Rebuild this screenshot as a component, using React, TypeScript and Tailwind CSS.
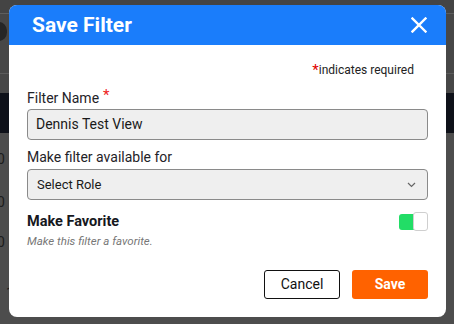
import React from "react";

export default function App() {
  return (
    <div
      className="relative w-[454px] h-[324px] overflow-hidden bg-[#474747]"
      style={{ fontFamily: "Roboto, 'Liberation Sans', sans-serif" }}
    >
      {/* backdrop content */}
      <div className="flex flex-col w-[454px]">
        <div className="h-[13px] bg-[#444444]" />
        <div className="h-px bg-[#5e5e5e]" />
        <div className="h-[59px] bg-[#474747] relative">
          <div className="absolute left-[-10px] top-[8px] w-[17px] h-[19px] rounded-full bg-[#262626]" />
        </div>
        <div className="h-px bg-[#5c5c5c]" />
        <div className="h-[19px] bg-[#474747]" />
        <div className="h-[40px] bg-[#0e1119]" />
        <div className="h-[191px] bg-[#4d4d4d] flex flex-col text-[14px] text-[#1c1c1c] leading-none">
          <div className="mt-[19px] ml-[-3px]">0</div>
          <div className="mt-[29px] ml-[-3px]">0</div>
          <div className="mt-[26px] ml-[-3px]">0</div>
          <div className="mt-[37px] ml-[6px]">1</div>
        </div>
      </div>

      {/* modal */}
      <div className="absolute left-[9px] top-[5px] w-[437px] h-[312px] bg-white rounded-[8px] overflow-hidden flex flex-col">
        <div className="h-[40px] bg-[#1a7dfb] flex items-center justify-between pl-[23px] pr-[19px]">
          <span className="text-white text-[21px] font-bold leading-none">Save Filter</span>
          <svg width="16" height="16" viewBox="0 0 16 16" className="mt-[-1px]">
            <path d="M1.5 1.5 L14.5 14.5 M14.5 1.5 L1.5 14.5" stroke="white" strokeWidth="2.4" strokeLinecap="square" />
          </svg>
        </div>
        <div className="flex flex-col px-[18px]">
          <div className="mt-[17px] flex justify-end pr-[14px] text-[12px] leading-[16px] text-[#222]">
            <span className="text-[#e00000] text-[15px] leading-[16px]">*</span>
            <span>indicates required</span>
          </div>
          <div className="mt-[10px] text-[14px] leading-[20px] text-[#1f2328] flex">
            <span>Filter Name</span>
            <span className="text-[#ee2222] text-[15px] leading-[14px] ml-[4px]">*</span>
          </div>
          <div className="mt-px h-[31px] bg-[#efefef] border border-[#8a8a8a] rounded-[4px] flex items-center pl-[8px] text-[14px] text-[#1a1a1a]">
            Dennis Test View
          </div>
          <div className="mt-[7px] text-[14px] leading-[20px] text-[#1f2328]">Make filter available for</div>
          <div className="mt-[2px] h-[31px] bg-[#efefef] border border-[#8a8a8a] rounded-[4px] flex items-center justify-between pl-[9px] pr-[11px] text-[13px] text-[#1a1a1a]">
            <span>Select Role</span>
            <svg width="9" height="6" viewBox="0 0 9 6">
              <path d="M1 1 L4.5 4.5 L8 1" fill="none" stroke="#666" strokeWidth="1.2" />
            </svg>
          </div>
          <div className="mt-[12px] flex items-start justify-between">
            <div className="flex flex-col">
              <span className="text-[14.5px] font-bold leading-[20px] text-[#16181d]">Make Favorite</span>
              <span className="mt-[1px] text-[11.5px] italic leading-[16px] text-[#777]">Make this filter a favorite.</span>
            </div>
            <div className="flex items-center">
              <div className="w-[16px] h-[16px] bg-[#22dd66] rounded-l-[3px] -mr-[2px]" />
              <div className="w-[15px] h-[19px] bg-white border border-[#cfcfcf] rounded-[3px]" />
            </div>
          </div>
          <div className="mt-[21px] flex justify-end gap-[12px]">
            <button className="w-[76px] h-[29px] bg-white border border-[#111] rounded-[3px] text-[14px] text-[#111] flex items-center justify-center">
              Cancel
            </button>
            <button className="w-[76px] h-[29px] bg-[#ff6200] rounded-[3px] text-[14px] font-bold text-white flex items-center justify-center">
              Save
            </button>
          </div>
        </div>
      </div>
    </div>
  );
}
